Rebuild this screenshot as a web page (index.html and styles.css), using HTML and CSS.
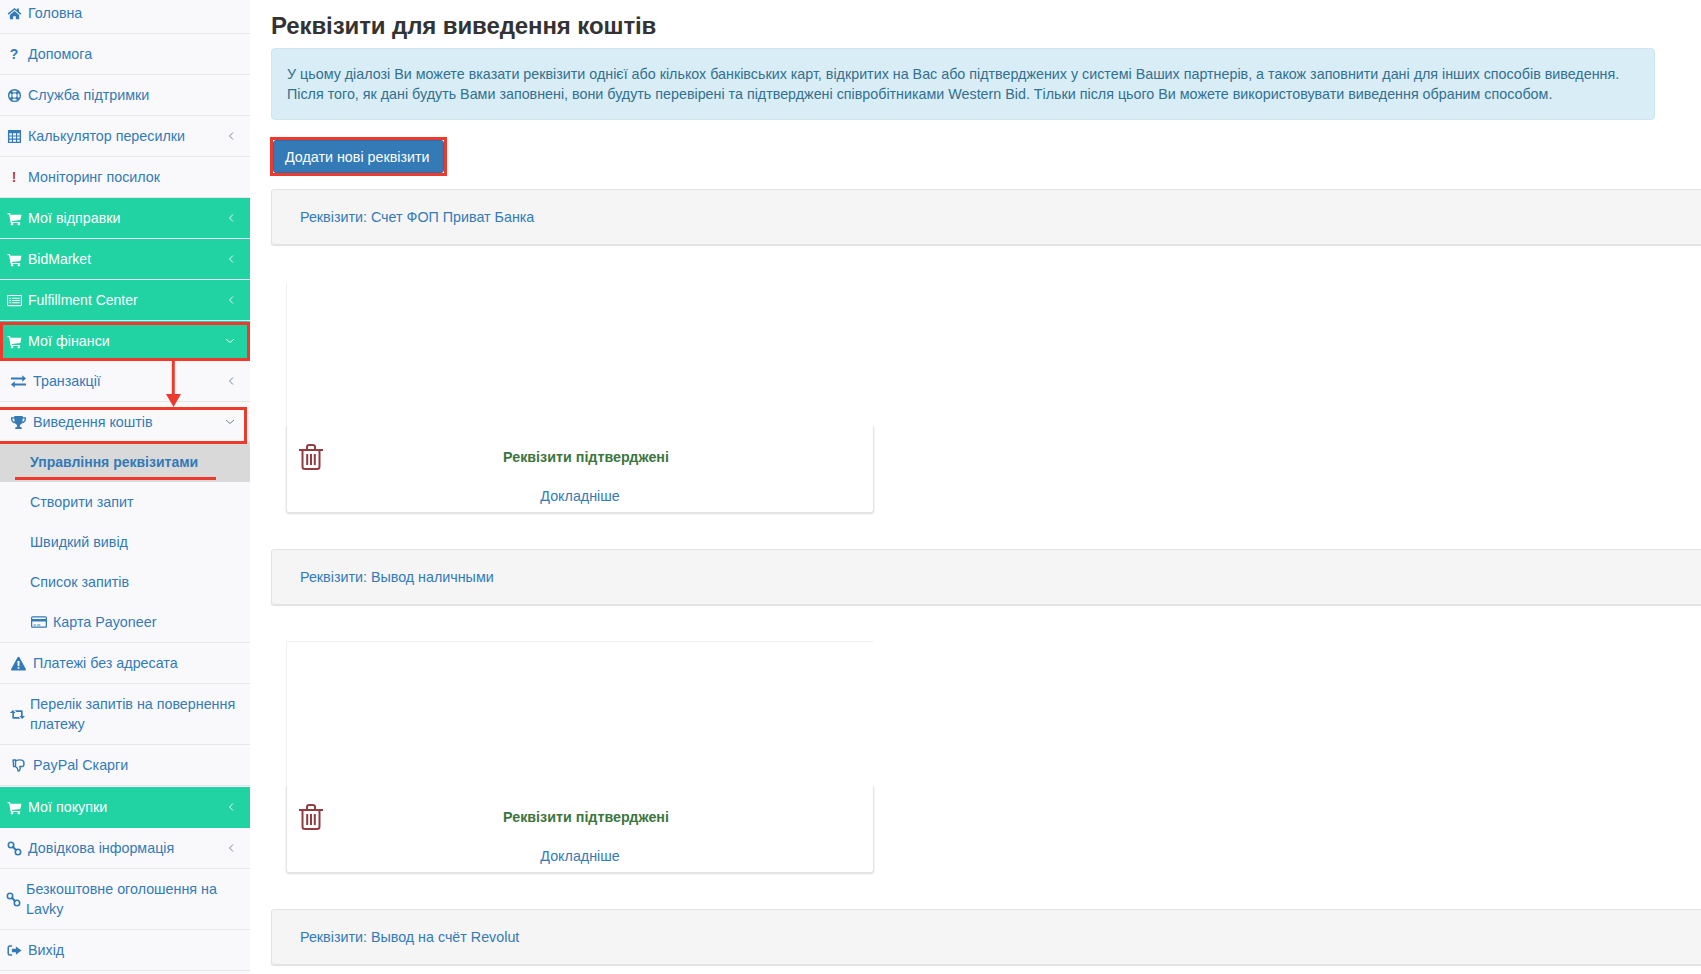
FILE: index.html
```html
<!DOCTYPE html>
<html lang="uk">
<head>
<meta charset="utf-8">
<title>Реквізити для виведення коштів</title>
<link rel="stylesheet" href="styles.css">
</head>
<body>
<svg class="defs" width="0" height="0" aria-hidden="true">
  <symbol id="i-home" viewBox="0 0 16 16"><path d="M8 2 .7 8.1l.9 1.1L8 3.900l6.400 5.300.9-1.100-2.600-2.200V2.600h-2v1.700z"/><path d="M3 9.600 8 5.400l5 4.200V14H9.400v-3.200H6.600V14H3z"/></symbol>
  <symbol id="i-ring" viewBox="0 0 16 16"><path fill-rule="evenodd" d="M8 1a7 7 0 1 0 0 14A7 7 0 0 0 8 1zm0 1.600c1 0 1.900.3 2.700.7L9.200 4.800a3.500 3.500 0 0 0-2.400 0L5.300 3.300c.8-.4 1.700-.7 2.700-.7zM3.300 5.300l1.500 1.500a3.500 3.500 0 0 0 0 2.400l-1.500 1.500a5.400 5.400 0 0 1 0-5.400zM8 5.600a2.400 2.400 0 1 1 0 4.800 2.400 2.400 0 0 1 0-4.800zm4.700-.3a5.400 5.400 0 0 1 0 5.400l-1.500-1.500a3.500 3.500 0 0 0 0-2.400zM6.800 11.200a3.500 3.500 0 0 0 2.400 0l1.500 1.500a5.400 5.400 0 0 1-5.400 0z"/></symbol>
  <symbol id="i-calc" viewBox="0 0 16 16"><path fill-rule="evenodd" d="M1 1h14v14H1zM2.500 4.600v2.200h2.700V4.600zm3.900 0v2.200h3.200V4.600zm4.400 0v2.200h2.700V4.600zM2.500 8v2.200h2.700V8zm3.900 0v2.200h3.200V8zm4.400 0v2.200h2.700V8zm-8.300 3.400v2.200h2.700v-2.200zm3.900 0v2.200h3.200v-2.200zm4.400 0v2.200h2.700v-2.200z"/></symbol>
  <symbol id="i-cart" viewBox="0 0 16 16"><path d="M.6 2.200h2.700l.4 1.700h11.700l-1.200 5.700-9 1 .2 1h8.600v1.300H3.900L2.300 3.500H.6z"/><circle cx="5.400" cy="14" r="1.300"/><circle cx="12.600" cy="14" r="1.300"/></symbol>
  <symbol id="i-list" viewBox="0 0 16 16"><path fill-rule="evenodd" d="M1.500 2h13A1.500 1.500 0 0 1 16 3.500v9a1.500 1.500 0 0 1-1.500 1.500h-13A1.500 1.500 0 0 1 0 12.500v-9A1.500 1.500 0 0 1 1.500 2zm0 1.200a.3.300 0 0 0-.3.3v9c0 .2.100.3.300.3h13a.3.300 0 0 0 .3-.3v-9a.3.300 0 0 0-.3-.3zM2.500 5h2v1.200h-2zm3 0h8v1.200h-8zm-3 2.400h2v1.200h-2zm3 0h8v1.200h-8zm-3 2.400h2V11h-2zm3 0h8V11h-8z"/></symbol>
  <symbol id="i-exchange" viewBox="0 0 16 16"><path d="M0 3.700h12V1.300L16 4.800l-4 3.500V5.900H0z"/><path d="M16 10.100H4V7.700L0 11.200l4 3.500v-2.400h12z"/></symbol>
  <symbol id="i-trophy" viewBox="0 0 16 16"><path fill-rule="evenodd" d="M3.500 1h9v1.400H16v2c0 2.400-1.900 4-4.200 4.400-.6.900-1.400 1.500-2.300 1.800V12c0 .7.600 1.200 2 1.200V15h-7v-1.800c1.400 0 2-.5 2-1.200v-1.400c-.9-.3-1.700-.9-2.300-1.800C1.900 8.400 0 6.800 0 4.400v-2h3.500zM1.500 3.800v.6c0 1.300.9 2.400 2.500 2.900-.3-.9-.5-2.100-.5-3.500zm13 0h-2c0 1.400-.2 2.600-.5 3.500 1.600-.5 2.500-1.600 2.500-2.900z"/></symbol>
  <symbol id="i-card" viewBox="0 0 18 16"><path fill-rule="evenodd" d="M1.800 1.500h14.400c1 0 1.800.8 1.800 1.800v9.400c0 1-.8 1.800-1.800 1.800H1.800c-1 0-1.800-.8-1.800-1.800V3.300c0-1 .8-1.800 1.800-1.800zM1.400 3.300v1.400h15.200V3.300c0-.2-.2-.4-.4-.4H1.800c-.2 0-.4.200-.4.400zm0 4.200v5.200c0 .2.200.4.400.4h14.400c.2 0 .4-.2.400-.4V7.500zM3 10.800h2.500V12H3zm4 0h3.500V12H7z"/></symbol>
  <symbol id="i-warn" viewBox="0 0 16 16"><path fill-rule="evenodd" d="M8 .8c.4 0 .8.200 1 .6l6.800 12.500c.4.700-.1 1.600-1 1.600H1.200c-.9 0-1.400-.9-1-1.600L7 1.400c.2-.4.600-.6 1-.6zM6.900 5.400l.2 5.400h1.800l.2-5.400zM7 11.900v1.800h2v-1.800z"/></symbol>
  <symbol id="i-retweet" viewBox="0 0 16 16"><path d="M3 3.200 6 6.400H4.300v4.300h5l1.800 1.900H3.400c-.5 0-.9-.4-.9-.9V6.400H0z"/><path d="M13 12.800 10 9.600h1.700V5.300h-5L4.900 3.400h7.700c.5 0 .9.400.9.900v5.300H16z"/></symbol>
  <symbol id="i-thumb" viewBox="0 0 16 16"><path fill="none" stroke="currentColor" stroke-width="1.500" stroke-linejoin="round" d="M2.200 2.200h2.600v7H2.800zM4.800 3c1.700-.8 3-1 4.700-1 1.600 0 3.300.1 3.500 1.300.8.500.9 1.400.5 2 .5.600.5 1.400 0 2 .2 1-.5 1.700-1.600 1.700H9.400c.4 1 .5 1.900.2 3-.2 1-.9 2-1.500 2-.4 0-.7-.3-.7-.7 0-1.700-1-3.300-2.600-4.100"/></symbol>
  <symbol id="i-link" viewBox="0 0 16 16"><g fill="none" stroke="currentColor" stroke-width="1.700"><circle cx="4.300" cy="4.300" r="2.900"/><circle cx="11.700" cy="11.700" r="2.900"/><path stroke-width="2.200" d="M5.700 5.700l4.600 4.600"/></g></symbol>
  <symbol id="i-exit" viewBox="0 0 16 16"><path d="M5.500 2.500v1.600H3c-.5 0-.9.400-.9.900v6c0 .5.400.9.900.9h2.500v1.600H3c-1.500 0-2.500-1-2.500-2.500V5c0-1.500 1-2.500 2.500-2.500z"/><path d="M9.500 3.600 15.500 8l-6 4.400V9.800H5.200V6.200h4.300z"/></symbol>
  <symbol id="i-left" viewBox="0 0 8 12"><path fill="none" stroke="currentColor" stroke-width="1" d="M6 2.500 2.500 6 6 9.500"/></symbol>
  <symbol id="i-down" viewBox="0 0 12 8"><path fill="none" stroke="currentColor" stroke-width="1" d="M2 2 6 5.500 10 2"/></symbol>
  <symbol id="i-trash" viewBox="0 0 24 26"><g fill="none" stroke="currentColor" stroke-width="2"><path d="M0 6h24M8 6V3.200C8 1.900 8.900 1 10.200 1h3.600C15.100 1 16 1.900 16 3.200V6M3.500 6v16.500C3.500 24 4.500 25 5.900 25h12.200c1.400 0 2.400-1 2.400-2.500V6M8.200 10v11M12 10v11M15.800 10v11"/></g></symbol>
</svg>

<div class="page">
  <aside class="sidebar">
    <ul class="menu">
      <li class="item item-first"><a class="link"><svg class="ico"><use href="#i-home"/></svg><span>Головна</span></a></li>
      <li class="item"><a class="link"><span class="ico glyph">?</span><span>Допомога</span></a></li>
      <li class="item"><a class="link"><svg class="ico"><use href="#i-ring"/></svg><span>Служба підтримки</span></a></li>
      <li class="item"><a class="link"><svg class="ico"><use href="#i-calc"/></svg><span>Калькулятор пересилки</span><svg class="chev"><use href="#i-left"/></svg></a></li>
      <li class="item"><a class="link"><span class="ico glyph glyph-red">!</span><span>Моніторинг посилок</span></a></li>
      <li class="item item-green"><a class="link"><svg class="ico"><use href="#i-cart"/></svg><span>Мої відправки</span><svg class="chev"><use href="#i-left"/></svg></a></li>
      <li class="item item-green"><a class="link"><svg class="ico"><use href="#i-cart"/></svg><span class="latin">BidMarket</span><svg class="chev"><use href="#i-left"/></svg></a></li>
      <li class="item item-green"><a class="link"><svg class="ico"><use href="#i-list"/></svg><span class="latin">Fulfillment Center</span><svg class="chev"><use href="#i-left"/></svg></a></li>
      <li class="item item-green item-open">
        <a class="link"><svg class="ico"><use href="#i-cart"/></svg><span>Мої фінанси</span><svg class="chev-down"><use href="#i-down"/></svg></a>
        <div class="mark mark-finance"></div>
        <svg class="mark-arrow" viewBox="0 0 16 48" aria-hidden="true"><path d="M6.800 0h3v34H16l-7.500 13L1 34h5.800z"/></svg>
      </li>
      <li>
        <ul class="submenu">
          <li class="item"><a class="link link-sub"><svg class="ico"><use href="#i-exchange"/></svg><span>Транзакції</span><svg class="chev"><use href="#i-left"/></svg></a></li>
          <li class="item item-withdraw">
            <a class="link link-sub"><svg class="ico"><use href="#i-trophy"/></svg><span>Виведення коштів</span><svg class="chev-down"><use href="#i-down"/></svg></a>
            <div class="mark mark-withdraw"></div>
            <ul class="subsub">
              <li class="leaf leaf-active"><a class="leaf-link">Управління реквізитами</a><div class="mark-line"></div></li>
              <li class="leaf"><a class="leaf-link">Створити запит</a></li>
              <li class="leaf"><a class="leaf-link">Швидкий вивід</a></li>
              <li class="leaf"><a class="leaf-link">Список запитів</a></li>
              <li class="leaf"><a class="leaf-link leaf-icon"><svg class="ico-card"><use href="#i-card"/></svg><span>Карта Payoneer</span></a></li>
            </ul>
          </li>
          <li class="item"><a class="link link-sub"><svg class="ico"><use href="#i-warn"/></svg><span>Платежі без адресата</span></a></li>
          <li class="item"><a class="link link-wrap"><svg class="ico"><use href="#i-retweet"/></svg><span>Перелік запитів на повернення платежу</span></a></li>
          <li class="item"><a class="link link-sub"><svg class="ico"><use href="#i-thumb"/></svg><span>PayPal Скарги</span></a></li>
        </ul>
      </li>
      <li class="item item-green item-buy"><a class="link"><svg class="ico"><use href="#i-cart"/></svg><span>Мої покупки</span><svg class="chev"><use href="#i-left"/></svg></a></li>
      <li class="item"><a class="link"><svg class="ico"><use href="#i-link"/></svg><span>Довідкова інформація</span><svg class="chev"><use href="#i-left"/></svg></a></li>
      <li class="item"><a class="link link-lavky"><svg class="ico"><use href="#i-link"/></svg><span>Безкоштовне оголошення на Lavky</span></a></li>
      <li class="item"><a class="link"><svg class="ico"><use href="#i-exit"/></svg><span>Вихід</span></a></li>
    </ul>
  </aside>

  <main class="content">
    <h1 class="title">Реквізити для виведення коштів</h1>
    <div class="alert">У цьому діалозі Ви можете вказати реквізити однієї або кількох банківських карт, відкритих на Вас або підтверджених у системі Ваших партнерів, а також заповнити дані для інших способів виведення. Після того, як дані будуть Вами заповнені, вони будуть перевірені та підтверджені співробітниками Western Bid. Тільки після цього Ви можете використовувати виведення обраним способом.</div>
    <div class="add-frame"><button class="btn" type="button">Додати нові реквізити</button></div>

    <section class="panel"><a class="panel-link">Реквізити: Счет ФОП Приват Банка</a></section>
    <article class="card card-first">
      <div class="card-image"></div>
      <div class="card-body">
        <div class="status-row">
          <svg class="trash"><use href="#i-trash"/></svg>
          <span class="status">Реквізити підтверджені</span>
        </div>
        <a class="more">Докладніше</a>
      </div>
    </article>

    <section class="panel"><a class="panel-link">Реквізити: Вывод наличными</a></section>
    <article class="card">
      <div class="card-image"></div>
      <div class="card-body">
        <div class="status-row">
          <svg class="trash"><use href="#i-trash"/></svg>
          <span class="status">Реквізити підтверджені</span>
        </div>
        <a class="more">Докладніше</a>
      </div>
    </article>

    <section class="panel"><a class="panel-link">Реквізити: Вывод на счёт Revolut</a></section>
  </main>
</div>
</body>
</html>
```

FILE: styles.css
```css
* { box-sizing: border-box; }
html, body { margin: 0; padding: 0; height: 100%; overflow: hidden; background: #fff; }
body { font-family: "Liberation Sans", Arial, sans-serif; font-size: 14.3px; line-height: 20px; color: #333; }
ul { list-style: none; margin: 0; padding: 0; }
.defs { position: absolute; }
.page { display: flex; align-items: flex-start; width: 1701px; height: 974px; overflow: hidden; }

/* Sidebar */
.sidebar { flex: 0 0 250px; width: 250px; height: 974px; background: #f9f9fb; }
.item { position: relative; border-bottom: 1px solid #e6e6e8; }
.item-first .link { padding-top: 3px; }
.link { display: flex; align-items: center; gap: 6.5px; padding: 10px 15px 10px 6.5px; color: #337ab7; }
.link-sub { padding-left: 10.5px; gap: 7.5px; }
.link-wrap { padding: 10px 8px 10px 9.5px; gap: 5.5px; }
.link-lavky { padding-left: 6px; gap: 5px; }
.ico { flex: 0 0 15px; width: 15px; height: 15px; fill: currentColor; }
.glyph { display: block; height: 20px; line-height: 20px; text-align: center; font-weight: 700; font-size: 14px; }
.glyph-red { color: #a94442; }
.latin { font-size: 14px; }
.chev { width: 8px; height: 12px; margin-left: auto; flex: none; color: #74869a; }
.chev-down { width: 12px; height: 8px; margin-left: auto; margin-right: -1px; flex: none; color: #74869a; }
.item-green { background: #21d2a3; border-bottom: 1px solid #eafaf6; }
.item-green .link { color: #fff; }
.item-green .chev, .item-green .chev-down { color: #e8fbf5; }
.item-open { border-bottom: 0; }
.item-buy { margin-top: 1px; border-bottom-color: #21d2a3; }
.item-withdraw { border-bottom: 1px solid #e6e6e8; }
.leaf { position: relative; height: 40px; }
.leaf-active { background: #d9d9d9; }
.leaf-link { display: flex; align-items: center; gap: 6px; padding: 10px 15px 10px 30px; color: #337ab7; }
.leaf-active .leaf-link { font-weight: 700; font-size: 14px; }
.ico-card { width: 16px; height: 16px; margin-left: 1px; fill: currentColor; }

/* Red annotations */
.mark { position: absolute; border: 3px solid #ee3a2c; pointer-events: none; z-index: 3; }
.mark-finance { left: 0; top: 1px; width: 250px; height: 39px; }
.mark-withdraw { left: -3px; top: 5px; width: 250px; height: 37px; }
.mark-line { position: absolute; left: 15px; top: 35px; width: 201px; height: 3px; background: #ee3a2c; }
.mark-arrow { position: absolute; left: 165px; top: 39px; width: 16px; height: 48px; fill: #ee3a2c; z-index: 2; }

/* Content */
.content { flex: 1 1 auto; min-width: 0; padding: 0 46px 0 21px; }
.title { margin: 11px 0 7px; font-size: 24px; line-height: 30px; font-weight: 700; letter-spacing: -0.1px; color: #333; }
.alert { height: 72px; padding: 15px; background: #d9edf7; border: 1px solid #cce5f0; border-radius: 4px; color: #31708f; }
.add-frame { display: inline-block; margin: 17px 0 13px -1px; border: 3px solid #ee3a2c; line-height: 0; vertical-align: top; }
.btn { display: block; height: 33px; padding: 1px 13px 0 11px; background: #337ab7; color: #fff; border: 1px solid #2e6da4; border-radius: 3px; font: 14.3px/20px "Liberation Sans", Arial, sans-serif; }
.panel { width: 1500px; height: 56px; padding: 17px 28px; background: #f5f5f5; border: 1px solid #e3e3e3; border-radius: 3px; box-shadow: 0 1px 1px rgba(0,0,0,.12); color: #337ab7; }
.panel-link { color: #337ab7; }
.card { width: 588px; height: 232px; margin: 36px 0 36px 15px; background: #fff; border-radius: 3px; }
.card-first { height: 230px; margin-top: 38px; }
.card-image { height: 145px; border-top: 1px solid #f3f3f3; border-left: 1px solid #f0f0f0; }
.card-first .card-image { border-top: 0; height: 143px; }
.card-body { height: 87px; border: 1px solid #e4e4e4; border-top: 0; border-radius: 0 0 3px 3px; box-shadow: 0 1px 2px rgba(0,0,0,.14); display: flex; flex-direction: column; }
.status-row { display: flex; align-items: center; height: 62px; padding: 0 0 0 12px; }
.trash { width: 24px; height: 26px; color: #913c40; flex: none; }
.status { flex: 1; text-align: center; font-weight: 700; color: #3c763d; padding-right: 24px; }
.more { display: block; margin-top: -2px; text-align: center; color: #337ab7; }
```
